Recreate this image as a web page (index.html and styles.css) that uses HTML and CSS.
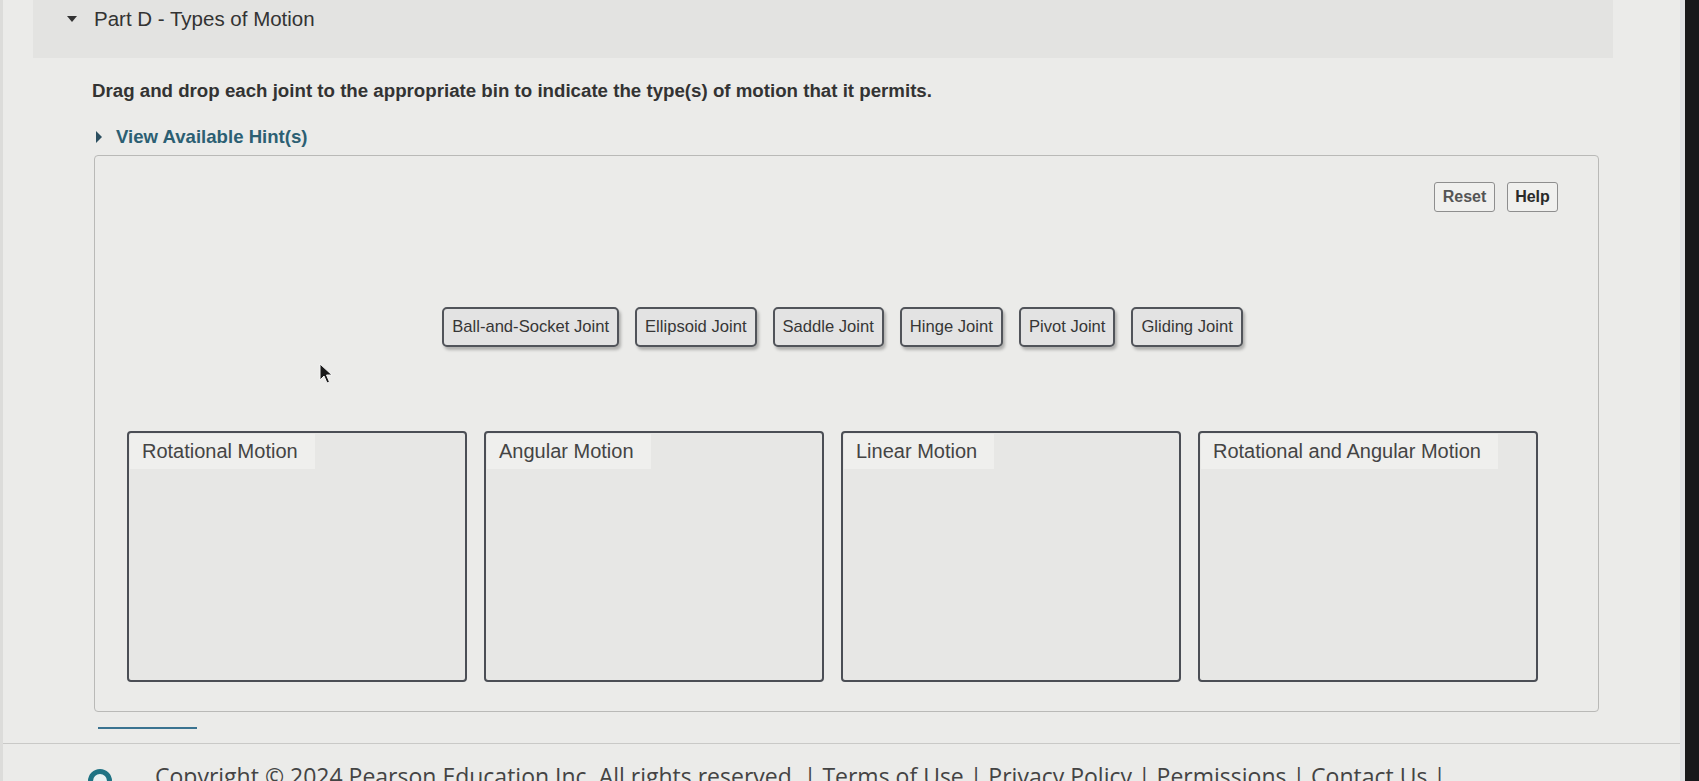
FILE: index.html
```html
<!DOCTYPE html>
<html lang="en">
<head>
<meta charset="utf-8">
<title>Part D - Types of Motion</title>
<link rel="stylesheet" href="styles.css">
</head>
<body>
<div class="screen">
  <div class="page">
    <div class="part-header">
      <span class="caret-down"></span>
      <span class="part-title">Part D - Types of Motion</span>
    </div>
    <div class="content">
      <p class="instruction">Drag and drop each joint to the appropriate bin to indicate the type(s) of motion that it permits.</p>
      <div class="hint"><span class="caret-right"></span><span>View Available Hint(s)</span></div>
      <div class="panel">
        <div class="toolbar">
          <button class="tool reset">Reset</button>
          <button class="tool help">Help</button>
        </div>
        <div class="chips">
          <div class="chip">Ball-and-Socket Joint</div>
          <div class="chip">Ellipsoid Joint</div>
          <div class="chip">Saddle Joint</div>
          <div class="chip">Hinge Joint</div>
          <div class="chip">Pivot Joint</div>
          <div class="chip">Gliding Joint</div>
        </div>
        <div class="bins">
          <div class="bin"><div class="bin-label">Rotational Motion</div></div>
          <div class="bin"><div class="bin-label">Angular Motion</div></div>
          <div class="bin"><div class="bin-label">Linear Motion</div></div>
          <div class="bin"><div class="bin-label">Rotational and Angular Motion</div></div>
        </div>
        <svg class="cursor" width="14" height="22" viewBox="0 0 14 22"><path d="M1 1 L1 17 L5 13 L8 20 L10.5 19 L7.5 12 L13 12 Z" fill="#1a1a1a" stroke="#f4f4f4" stroke-width="1"/></svg>
      </div>
      <div class="submit-line"></div>
    </div>
    <footer class="footer">
      <span class="logo"></span>
      <span class="copy">Copyright © 2024 Pearson Education Inc. All rights reserved. | Terms of Use | Privacy Policy | Permissions | Contact Us |</span>
    </footer>
  </div>
  <div class="bezel"></div>
</div>
</body>
</html>
```

FILE: styles.css
```css
* { box-sizing: border-box; }
html, body { margin: 0; padding: 0; }
body {
  background: #ebebe9;
  font-family: "Liberation Sans", Arial, sans-serif;
  color: #333;
  overflow: hidden;
}
.screen {
  display: flex;
  width: 1699px;
  height: 781px;
  overflow: hidden;
}
.page {
  flex: 1 1 auto;
  min-width: 0;
  display: flex;
  flex-direction: column;
  background: #ebebe9;
  border-left: 3px solid #dcdcda;
  border-right: 5px solid #dfe1e3;
  overflow: hidden;
}
.page > * { flex-shrink: 0; }
.bezel {
  flex: 0 0 14px;
  background: #17181a;
}
.part-header {
  margin-left: 30px;
  width: 1580px;
  height: 58px;
  background: #e3e3e1;
  display: flex;
  align-items: flex-start;
  padding-left: 34px;
  padding-top: 7px;
}
.caret-down {
  width: 0; height: 0;
  border-left: 5px solid transparent;
  border-right: 5px solid transparent;
  border-top: 6px solid #333;
  margin-top: 9px;
  margin-right: 17px;
}
.part-title {
  font-size: 20.5px;
  line-height: 23px;
  color: #333;
}
.content {
  padding-left: 89px;
}
.instruction {
  margin: 22px 0 0 0;
  font-size: 18.7px;
  font-weight: bold;
  color: #333;
  line-height: 22px;
}
.hint {
  margin-top: 24px;
  display: flex;
  align-items: center;
  font-size: 18.6px;
  font-weight: bold;
  color: #2c5f73;
  line-height: 22px;
}
.caret-right {
  width: 0; height: 0;
  border-top: 6px solid transparent;
  border-bottom: 6px solid transparent;
  border-left: 6px solid #2c4f60;
  margin-left: 4px;
  margin-right: 14px;
}
.panel {
  position: relative;
  margin-top: 7px;
  margin-left: 2px;
  width: 1505px;
  height: 557px;
  border: 1px solid #b9b9b7;
  border-radius: 4px;
  background: #ebebe9;
  padding: 26px 40px 0 32px;
  display: flex;
  flex-direction: column;
}
.panel > * { flex-shrink: 0; }
.toolbar {
  display: flex;
  justify-content: flex-end;
  gap: 12px;
}
.tool {
  font-family: "Liberation Sans", Arial, sans-serif;
  font-size: 16px;
  font-weight: bold;
  height: 30px;
  padding: 0;
  background: #f0f0ee;
  border: 1.5px solid #8e8e8e;
  border-radius: 3px;
}
.reset { color: #555; width: 61px; }
.help { color: #2a2a2a; width: 51px; }
.chips {
  margin-top: 95px;
  display: flex;
  justify-content: center;
  gap: 16px;
}
.chip {
  height: 40px;
  display: flex;
  align-items: center;
  padding: 0 8px;
  font-size: 16.6px;
  color: #363636;
  background: #e3e3e3;
  border: 2px solid #51545a;
  border-radius: 5px;
  box-shadow: 2px 3px 3px rgba(0,0,0,0.25);
}
.bins {
  margin-top: 84px;
  display: flex;
  gap: 17px;
}
.bin {
  width: 340px;
  height: 251px;
  border: 2px solid #4b4e55;
  border-radius: 4px;
  background: #e7e7e5;
}
.bin-label {
  display: inline-block;
  margin: 1px 0 0 1px;
  padding: 6px 17px 6px 12px;
  font-size: 20px;
  line-height: 23px;
  color: #444;
  background: #efefed;
}
.cursor {
  position: absolute;
  left: 224px;
  top: 207px;
}
.submit-line {
  margin-top: 15px;
  margin-left: 6px;
  width: 99px;
  height: 2px;
  background: #3a7390;
}
.footer {
  margin-top: 14px;
  border-top: 1px solid #c9c9c7;
  display: flex;
  align-items: flex-start;
  padding-top: 18px;
  padding-left: 85px;
  gap: 43px;
  white-space: nowrap;
}
.logo {
  width: 24px;
  height: 24px;
  border-radius: 50%;
  border: 5px solid #1f7283;
  background: #e8f0f1;
  margin-top: 7px;
  flex-shrink: 0;
}
.copy {
  font-family: "Open Sans", sans-serif;
  font-size: 23px;
  color: #444;
  line-height: 28px;
}
```
